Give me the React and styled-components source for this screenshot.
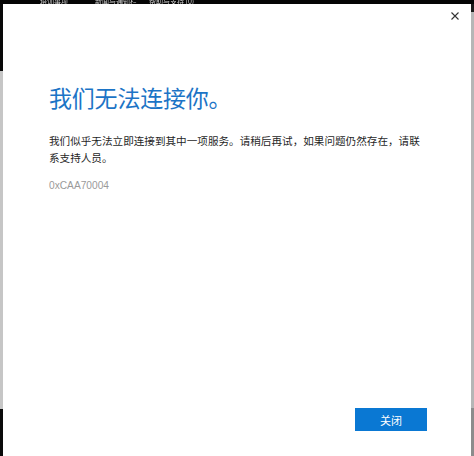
import React from "react";
import styled, { createGlobalStyle } from "styled-components";

const GlobalStyle = createGlobalStyle`
  html, body, #root {
    height: 100%;
  }
  body {
    margin: 0;
    background: #050505;
    font-family: "Noto Sans CJK SC", "Liberation Sans", sans-serif;
    overflow: hidden;
  }
`;

const Screen = styled.div`
  display: grid;
  grid-template-rows: 4px 1fr;
  height: 100%;
`;

// window behind the dialog, only the lower edge of its menu shows
const BehindBar = styled.div`
  display: flex;
  align-items: flex-end;
  height: 4px;
  padding-left: 40px;
  overflow: hidden;
  background: #050505;
`;

const BehindLabel = styled.span`
  flex-shrink: 0;
  margin-right: ${(p) => p.$gap || 0}px;
  font-size: 7px;
  line-height: 7px;
  color: #cfcfcf;
  filter: blur(0.3px);
  transform: translateY(1px);
`;

const Body = styled.div`
  display: grid;
  grid-template-columns: 3px 1fr 3px;
  min-height: 0;
`;

const Strip = styled.div`
  display: flex;
  flex-direction: column;
`;

const StripPart = styled.div`
  flex: ${(p) => (p.$grow ? 1 : "none")};
  height: ${(p) => (p.$h ? `${p.$h}px` : "auto")};
  background: ${(p) => p.$color};
`;

const Dialog = styled.div`
  display: flex;
  flex-direction: column;
  background: #ffffff;
`;

const Header = styled.div`
  display: flex;
  justify-content: flex-end;
  align-items: center;
  height: 24px;
  padding-right: 12px;
`;

const CloseButton = styled.button`
  display: flex;
  padding: 0;
  border: none;
  background: none;
  cursor: pointer;
`;

const Content = styled.div`
  display: flex;
  flex-direction: column;
  padding: 0 46px;
`;

const Title = styled.h1`
  margin: 55px 0 0;
  font-size: 23px;
  line-height: 28px;
  font-weight: 400;
  color: #1c74c6;
  letter-spacing: -0.2px;
`;

const Message = styled.p`
  margin: 20.5px 0 0;
  max-width: 375px;
  font-size: 10.6px;
  line-height: 17px;
  color: #1f1f1f;
`;

const ErrorCode = styled.div`
  margin-top: 11px;
  font-family: "Liberation Sans", sans-serif;
  font-size: 10.2px;
  line-height: 17px;
  color: #9a9a9a;
`;

const Footer = styled.div`
  display: flex;
  justify-content: flex-end;
  margin-top: auto;
  padding: 0 44px 25px 0;
`;

const PrimaryButton = styled.button`
  width: 72px;
  height: 23px;
  padding: 0;
  border: none;
  background: #0a78d3;
  color: #ffffff;
  font-family: "Noto Sans CJK SC", sans-serif;
  font-size: 11px;
  cursor: pointer;
`;

const CloseIcon = () => (
  <svg width="8" height="8" viewBox="0 0 8 8">
    <path d="M0.5 0.5 L7.5 7.5 M7.5 0.5 L0.5 7.5" stroke="#333" strokeWidth="1.1" />
  </svg>
);

export default function App() {
  return (
    <>
      <GlobalStyle />
      <Screen>
        <BehindBar>
          <BehindLabel $gap={27}>培训事项</BehindLabel>
          <BehindLabel $gap={12}>新闻与通知栏</BehindLabel>
          <BehindLabel>帮助与支持 (0)</BehindLabel>
        </BehindBar>
        <Body>
          <Strip>
            <StripPart $h={67} $color="#080808" />
            <StripPart $h={338} $color="#c6c6c6" />
            <StripPart $grow $color="#0a0a0a" />
          </Strip>
          <Dialog>
            <Header>
              <CloseButton aria-label="关闭">
                <CloseIcon />
              </CloseButton>
            </Header>
            <Content>
              <Title>我们无法连接你。</Title>
              <Message>
                我们似乎无法立即连接到其中一项服务。请稍后再试，如果问题仍然存在，请联系支持人员。
              </Message>
              <ErrorCode>0xCAA70004</ErrorCode>
            </Content>
            <Footer>
              <PrimaryButton>关闭</PrimaryButton>
            </Footer>
          </Dialog>
          <Strip>
            <StripPart $h={8} $color="#1a1a1a" />
            <StripPart $h={396} $color="#b6b6b6" />
            <StripPart $grow $color="#8c8c8c" />
          </Strip>
        </Body>
      </Screen>
    </>
  );
}
